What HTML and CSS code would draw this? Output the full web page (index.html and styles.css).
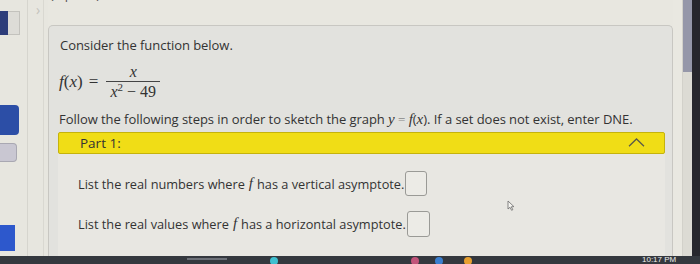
FILE: index.html
```html
<!DOCTYPE html>
<html>
<head>
<meta charset="utf-8">
<link rel="stylesheet" href="styles.css">
</head>
<body>
<div class="screen">
  <div class="main-row">
    <aside class="sidebar">
      <div class="sb-col">
        <div class="sb-top"><span class="navy"></span><span class="graybox"></span></div>
        <div class="tab tab-blue"></div>
        <div class="tab tab-gray"></div>
        <div class="tab tab-blue2"></div>
      </div>
      <div class="sb-col2"><span class="faint-chev">&#x203A;</span></div>
    </aside>
    <main class="content">
      <div class="points"><span>(1 point)</span></div>
      <section class="panel">
        <p class="intro">Consider the function below.</p>
        <div class="formula">
          <span class="mi">f</span><span class="mo">(</span><span class="mi">x</span><span class="mo">)</span>
          <span class="eq">=</span>
          <span class="frac">
            <span class="num"><span class="mi">x</span></span>
            <span class="den"><span class="mi">x</span><sup>2</sup><span class="minus">&minus;</span><span class="mn">49</span></span>
          </span>
        </div>
        <p class="steps">Follow the following steps in order to sketch the graph <span class="mi">y</span> <span class="eqs">=</span> <span class="mi">f</span>(<span class="mi">x</span>). If a set does not exist, enter DNE.</p>
        <div class="part">
          <div class="part-head">
            <span>Part 1:</span>
            <svg class="chev" width="17" height="9" viewBox="0 0 17 9"><path d="M1 8.2 L8.5 1 L16 8.2" fill="none" stroke="#5a5a4a" stroke-width="1.3"/></svg>
          </div>
          <div class="part-body">
            <div class="q">List the real numbers where <span class="mi">f</span> has a vertical asymptote.<span class="box"></span></div>
            <div class="q q2">List the real values where <span class="mi">f</span> has a horizontal asymptote.<span class="box"></span></div>
            <svg class="cursor" width="8" height="11" viewBox="0 0 8 11"><path d="M1 1 L1 9 L3 7.3 L4.6 10.3 L5.8 9.7 L4.3 6.8 L6.9 6.6 Z" fill="#f4f4f0" stroke="#6a6a6a" stroke-width="0.8"/></svg>
          </div>
        </div>
      </section>
    </main>
    <div class="right-edge">
      <div class="edge-cream"></div>
      <div class="scroll"><div class="thumb"></div></div>
      <div class="edge-dark"></div>
    </div>
  </div>
  <footer class="taskbar">
    <span class="tb-seg"></span>
    <span class="dot teal"></span>
    <span class="dot pink"></span>
    <span class="dot blue"></span>
    <span class="dot orange"></span>
    <span class="time">10:17 PM</span>
  </footer>
</div>
</body>
</html>
```
FILE: styles.css
```css
* { box-sizing: border-box; }
html, body { margin: 0; padding: 0; }
body {
  width: 700px;
  height: 264px;
  overflow: hidden;
  background: #e8e7e0;
  font-family: "Open Sans", "Liberation Sans", sans-serif;
  color: #333333;
}
.screen { width: 700px; height: 264px; display: flex; flex-direction: column; }
.main-row { display: flex; height: 256px; flex-shrink: 0; }

.sidebar { width: 48px; display: flex; background: #e7e6df; }
.sb-col { width: 28px; border-right: 1px solid #d6d5ce; display: flex; flex-direction: column; }
.sb-col2 { width: 16px; border-right: 1px solid #d9d8d1; }
.faint-chev { display: block; margin: 3px 0 0 8px; color: #c4c3bc; font-size: 14px; line-height: 14px; }
.sb-top { display: flex; margin-top: 11px; height: 24px; flex-shrink: 0; }
.navy { width: 8px; background: #2d3d7a; }
.graybox { width: 12px; background: #dddcd7; border: 1px solid #c3c2bd; border-left: none; }
.tab { border-radius: 0 4px 4px 0; flex-shrink: 0; }
.tab-blue { margin-top: 70px; width: 19px; height: 30px; background: #2c4ea6; }
.tab-gray { margin-top: 8px; width: 17px; height: 19px; background: #c9c7d2; border: 1px solid #a9a8b2; border-left: none; }
.tab-blue2 { margin-top: 63px; width: 15px; height: 26px; background: #2d58cc; border-radius: 0; }

.content { width: 625px; display: flex; flex-direction: column; min-height: 0; }
.points { height: 25px; flex-shrink: 0; overflow: hidden; font-size: 13px; color: #555; padding-left: 2px; }
.points span { display: block; margin-top: -16px; line-height: 20px; }

.panel {
  flex: 1;
  min-height: 0;
  overflow: hidden;
  background: #e2e2de;
  border: 1px solid #c8c7c2;
  border-bottom: none;
  border-radius: 5px 5px 0 0;
  padding: 9px 7px 0 9px;
}
.intro { margin: 0 0 0 2px; font-size: 13px; line-height: 20px; letter-spacing: -0.05px; }
.mi { font-family: "Liberation Serif", "DejaVu Serif", serif; font-style: italic; }

.formula {
  margin: 8px 0 0 1px;
  display: flex;
  align-items: center;
  height: 37px;
  font-family: "Liberation Serif", serif;
  font-size: 17px;
  color: #333;
}
.formula .mo { font-size: 17px; }
.formula .mi { font-size: 17px; }
.eq { margin: 0 8px 0 6px; font-size: 17px; }
.frac { display: inline-flex; flex-direction: column; align-items: center; margin-left: 0; }
.num { display: block; padding: 0 0 2px; line-height: 15px; font-size: 16px; border-bottom: 1px solid #444; width: 54px; text-align: center; }
.num .mi, .den .mi { font-size: 16px; }
.den { display: block; line-height: 17px; font-size: 16px; padding-top: 1px; }
.den sup { font-size: 11px; vertical-align: 6px; line-height: 0; }
.minus { margin: 0 4px; }
.mn { font-size: 16px; }

.steps { margin: 9px 0 0 1px; font-size: 13px; line-height: 20px; letter-spacing: -0.05px; white-space: nowrap; }
.steps .mi { font-size: 15px; }
.eqs { font-family: "Liberation Serif", serif; color: #888; }

.part { margin-top: 2px; }
.part-head {
  height: 22px;
  background: #f0dd16;
  border: 1px solid #c5b30c;
  border-radius: 2px;
  display: flex;
  align-items: center;
  justify-content: space-between;
  padding: 0 19px 0 21px;
  font-size: 13.5px;
}
.chev { display: block; margin-top: -2px; }
.part-body {
  position: relative;
  height: 120px;
  background: #e8e7e2;
  padding: 17px 0 0 20px;
  display: flex;
  flex-direction: column;
  gap: 15px;
}
.q { display: flex; align-items: center; font-size: 12.75px; height: 25px; white-space: nowrap; }
.q .mi { font-size: 15px; margin: 0 4px; }
.box {
  width: 22px;
  height: 25px;
  margin-left: 1px;
  border: 1px solid #9a9a96;
  border-radius: 3px;
  background: #ecebe6;
}
.q2 .box { height: 26px; width: 23px; }
.cursor { position: absolute; left: 449px; top: 46px; }

.right-edge { width: 27px; display: flex; }
.edge-cream { width: 10px; background: #e9e8e1; border-right: 1px solid #d2d1ca; }
.scroll { width: 9px; background: #dcdbd4; }
.thumb { height: 72px; background: #9597a9; }
.edge-dark { width: 8px; background: #27272d; }

.taskbar {
  height: 8px;
  background: #34383e;
  display: flex;
  align-items: flex-start;
  overflow: hidden;
}
.tb-seg { margin-left: 187px; margin-top: 2px; width: 40px; height: 2px; background: #6c7078; }
.dot { width: 8px; height: 8px; border-radius: 50%; margin-top: 1px; }
.teal { margin-left: 43px; background: #3fc0d0; }
.pink { margin-left: 133px; background: #c2547a; }
.blue { margin-left: 16px; background: #3a7fd0; }
.orange { margin-left: 21px; background: #e8a030; }
.time { margin-left: 170px; font-size: 8px; color: #eee; line-height: 8px; font-family: "Liberation Sans", sans-serif; }
```
